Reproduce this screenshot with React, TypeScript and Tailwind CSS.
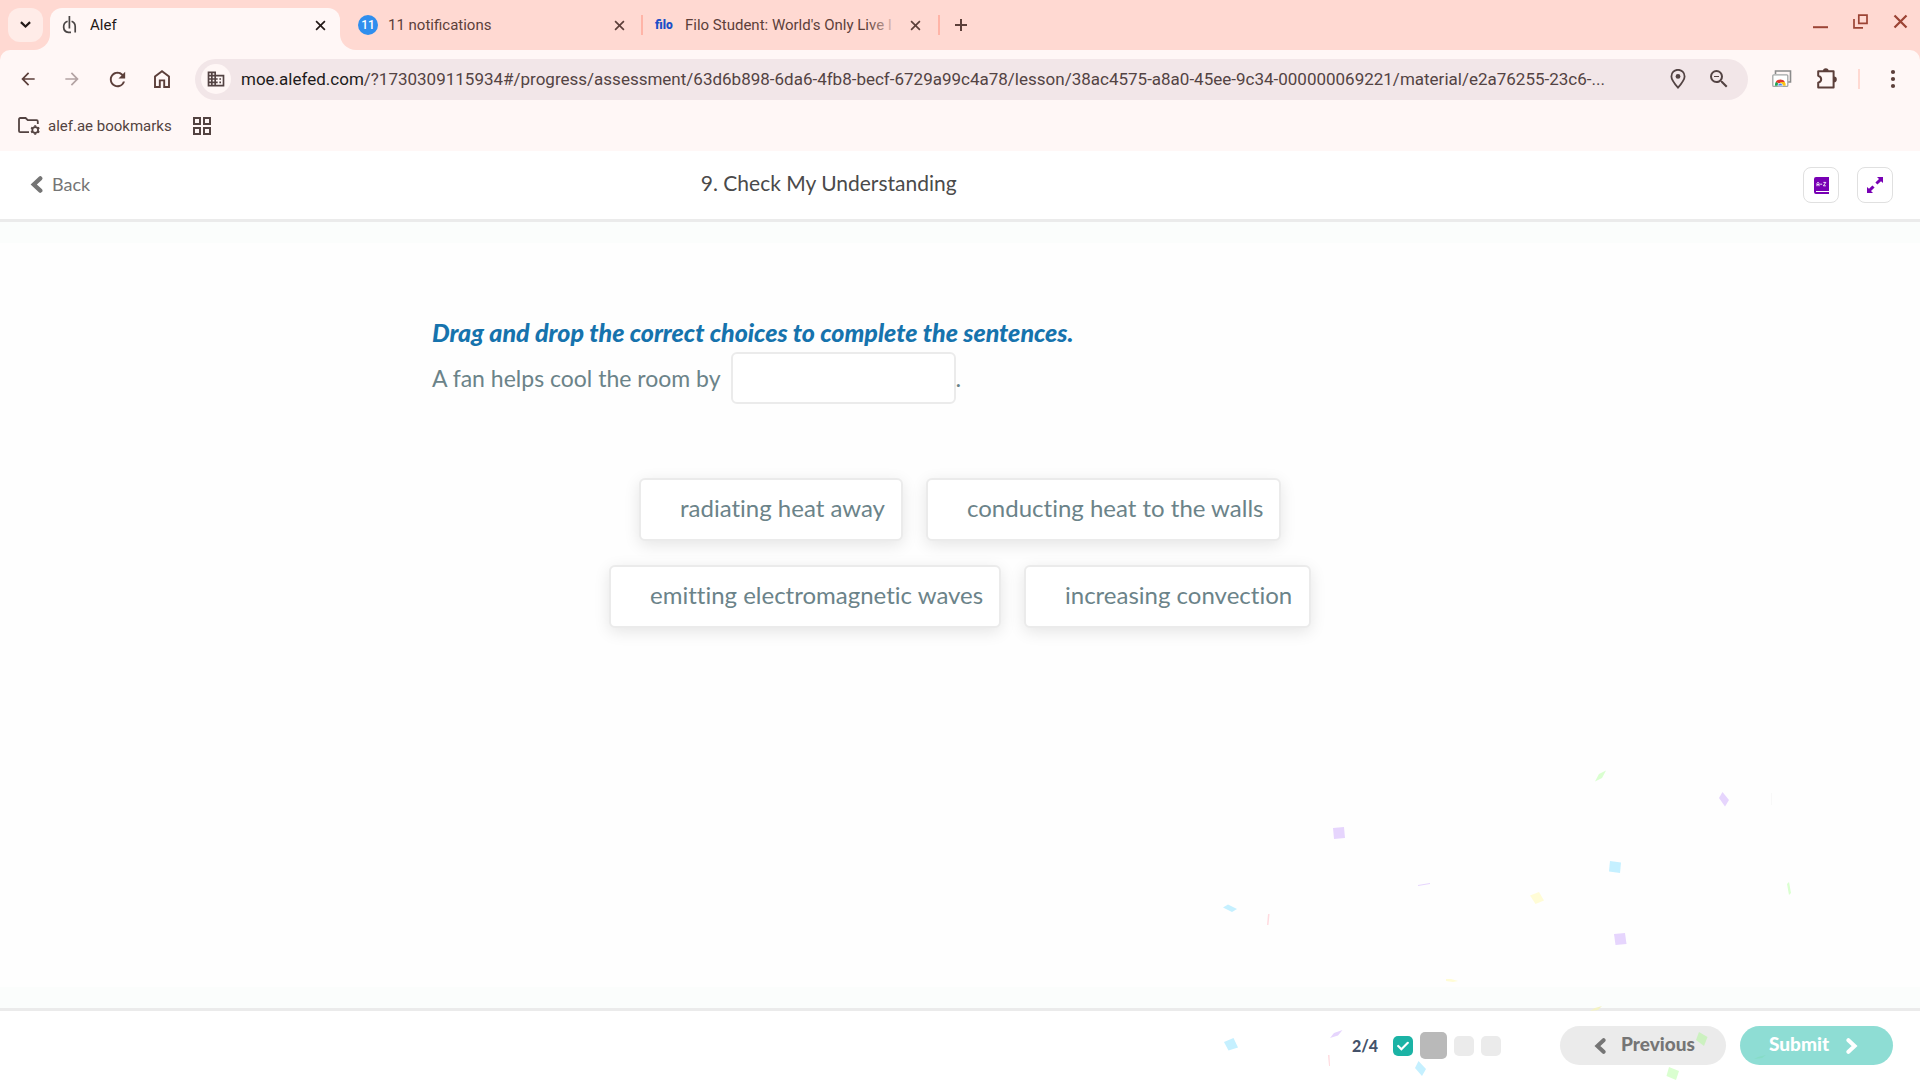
import type { ReactNode } from "react";
import { MdArrowBack, MdArrowForward, MdRefresh, MdDomain, MdZoomOut, MdOutlineGridView } from "react-icons/md";

const confetti: { points: string; fill: string }[] = [
  { points: "1333,828 1344,827 1345,838 1334,839", fill: "#e6d5fd" },
  { points: "1418,885 1424,884 1430,883 1430,884 1424,885 1418,886", fill: "#e6d5fd" },
  { points: "1223,907.5 1228,904.5 1237,909 1232,912", fill: "#c5f0ff" },
  { points: "1267,925 1268,914 1269.5,914 1268.5,925", fill: "#ffdbe0" },
  { points: "1530,895.5 1539,892 1544,900.5 1535.5,904", fill: "#fffcd6" },
  { points: "1446,979 1451,979 1458,981 1453,982 1446,981", fill: "#fffcd6" },
  { points: "1224,1042 1233.5,1038 1238,1047.5 1228.5,1050.5", fill: "#c5f0ff" },
  { points: "1330,1038 1334,1033 1342.5,1030 1338,1035.5", fill: "#e6d5fd" },
  { points: "1328,1055 1329.5,1055 1330,1066 1329,1066", fill: "#ffdbe0" },
  { points: "1418.5,1061 1426,1069 1422,1076 1415,1068", fill: "#c5f0ff" },
  { points: "1595,781.5 1599,774 1606,770.5 1602,778", fill: "#daffd0" },
  { points: "1722.5,792 1729,800 1725,806.5 1719,798", fill: "#e6d5fd" },
  { points: "1771,793 1772,793 1772,805 1771,805", fill: "#f8f8f8" },
  { points: "1610,861 1621,862.5 1620,873 1609,871.5", fill: "#c5f0ff" },
  { points: "1787,884 1789,882 1791,893 1789,895", fill: "#daffd0" },
  { points: "1614,934 1625,933 1626.5,944 1615.5,945", fill: "#e6d5fd" },
  { points: "1590,1011 1595,1008 1602,1006 1598,1010", fill: "#f4f3c4" },
  { points: "1699,1032 1707.5,1037 1704,1046 1696,1040", fill: "#ccf1c0" },
  { points: "1669,1067 1679,1071 1676,1080 1666.5,1076", fill: "#daffd0" },
  { points: "1754,1059 1758,1057 1766,1055 1762,1058", fill: "#86dcc6" },
];

const choices: { label: string; width: string }[][] = [
  [
    { label: "radiating heat away", width: "w-[264px]" },
    { label: "conducting heat to the walls", width: "w-[355px]" },
  ],
  [
    { label: "emitting electromagnetic waves", width: "w-[392px]" },
    { label: "increasing convection", width: "w-[287px]" },
  ],
];

function Cross({ className }: { className: string }) {
  return (
    <svg viewBox="0 0 12 12" className={className} fill="none" stroke="currentColor" strokeWidth="1.8">
      <path d="M1.2 1.2 10.8 10.8M10.8 1.2 1.2 10.8" />
    </svg>
  );
}

function Chevron({ right, className }: { right?: boolean; className: string }) {
  return (
    <svg viewBox="0 0 12 16" className={className} fill="none" stroke="currentColor" strokeWidth="4" strokeLinecap="round" strokeLinejoin="miter">
      <path d={right ? "M2.4 2.2 8.6 8 2.4 13.8" : "M9.6 2.2 3.4 8 9.6 13.8"} />
    </svg>
  );
}

function Tab({ icon, title, className, children }: { icon: ReactNode; title: string; className: string; children?: ReactNode }) {
  return (
    <div className={`flex h-[34px] items-center ${className}`}>
      {icon}
      <span className="min-w-0 flex-1 overflow-hidden whitespace-nowrap">{title}</span>
      {children}
      <button aria-label={`Close ${title}`} className="ml-2 flex size-4 items-center justify-center">
        <Cross className="size-[11px]" />
      </button>
    </div>
  );
}

function TabStrip() {
  return (
    <div className="flex h-[50px] items-start bg-[#ffd9d2] pr-3 text-[15px] text-[#5c3f3a]">
      <div className="h-[50px] w-[50px] bg-[#fff7f6]">
        <div className="h-[50px] rounded-br-2xl bg-[#ffd9d2] pl-2 pt-2">
          <button aria-label="Search tabs" className="flex h-[34px] w-[35px] items-center justify-center rounded-xl bg-[#ffece8] text-[#231917]">
            <svg viewBox="0 0 12 8" className="w-[11px]" fill="none" stroke="currentColor" strokeWidth="2.4">
              <path d="M1 1.2 6 6 11 1.2" />
            </svg>
          </button>
        </div>
      </div>
      <div className="h-[50px] bg-[#ffd9d2] pt-2">
        <Tab
          title="Alef"
          className="h-[42px] w-[290px] rounded-t-xl bg-[#fff7f6] pb-2 pl-3 pr-3 text-[#231917]"
          icon={
            <svg viewBox="0 0 16 18" className="mr-3 h-[18px] w-4 text-[#4a4545]" fill="none" stroke="currentColor" strokeWidth="1.7">
              <path d="M7.4 0V12.5M5.6 5.2C.2 7 .2 15.4 6.4 16.4H9M9.6 5.2C12 6 13.2 8 13.2 10.5V16.6" />
            </svg>
          }
        />
      </div>
      <div className="h-[50px] bg-[#fff7f6]">
        <div className="h-[50px] rounded-bl-2xl bg-[#ffd9d2] pt-2">
          <Tab
            title="11 notifications"
            className="w-[301px] pl-[18px] pr-[14px]"
            icon={<span className="mr-[10px] flex size-5 items-center justify-center rounded-full bg-[#2f8eee] text-xs font-medium text-white">11</span>}
          />
        </div>
      </div>
      <div className="mt-[15px] h-5 w-[2px] bg-[#ffb4a7]" />
      <div className="pt-2">
        <Tab
          title="Filo Student: World's Only Live I"
          className="w-[295px] pl-3 pr-[15px]"
          icon={<span className="mr-2 w-[22px] text-xs font-black text-[#1b50c8]">filo</span>}
        >
          <span className="-ml-8 h-6 w-8 bg-linear-to-r from-transparent to-[#ffd9d2]" />
        </Tab>
      </div>
      <div className="mt-[15px] h-5 w-[2px] bg-[#ffb4a7]" />
      <button aria-label="New tab" className="ml-[15px] mt-[19px] size-3">
        <svg viewBox="0 0 12 12" className="size-3" stroke="currentColor" strokeWidth="2">
          <path d="M6 0V12M0 6H12" />
        </svg>
      </button>
      <div className="ml-auto mt-[14px] flex items-center gap-[25px] text-[#9c4435]">
        <button aria-label="Minimize">
          <svg viewBox="0 0 15 15" className="size-[15px]" stroke="currentColor" strokeWidth="2">
            <path d="M0 13.2H15" />
          </svg>
        </button>
        <button aria-label="Restore">
          <svg viewBox="0 0 15 15" className="size-[15px]" fill="none" stroke="currentColor" strokeWidth="1.7">
            <path d="M5.8 1.2H14V9.4H5.8ZM1 5V13.8H10" />
          </svg>
        </button>
        <button aria-label="Close window">
          <Cross className="size-[15px]" />
        </button>
      </div>
    </div>
  );
}

function Toolbar() {
  return (
    <div className="bg-[#ffd9d2]">
      <div className="rounded-t-[10px] bg-[#fff7f6]">
        <div className="flex h-[58px] items-center pl-[18px] text-[#5c3f3a]">
          <button aria-label="Go back"><MdArrowBack className="size-5" /></button>
          <button aria-label="Go forward" className="ml-6 text-[#b3a3a3]"><MdArrowForward className="size-5" /></button>
          <button aria-label="Reload" className="ml-6"><MdRefresh className="size-[23px]" /></button>
          <button aria-label="Home" className="ml-[22px]">
            <svg viewBox="0 0 16 18" className="mx-[3px] h-[18px] w-4" fill="none" stroke="currentColor" strokeWidth="1.9">
              <path d="M1 17V6.4L8 1.2 15 6.4V17H10.2V10.4H5.8V17Z" />
            </svg>
          </button>
          <div className="ml-[22px] flex h-[41px] min-w-0 flex-1 items-center rounded-full bg-[#f2e6e8] pl-[6px] pr-[17px] text-[#534343]">
            <button aria-label="Site information" className="flex size-[30px] shrink-0 items-center justify-center rounded-full bg-[#fff7f6]">
              <MdDomain className="size-5" />
            </button>
            <p className="ml-[10px] min-w-0 flex-1 truncate pt-px text-[17px]">
              <span className="text-[#201a1a]">moe.alefed.com</span>
              /?1730309115934#/progress/assessment/63d6b898-6da6-4fb8-becf-6729a99c4a78/lesson/38ac4575-a8a0-45ee-9c34-000000069221/material/e2a76255-23c6-...
            </p>
            <button aria-label="Location" className="ml-7">
              <svg viewBox="0 0 16 20" className="h-5 w-4" fill="none" stroke="currentColor" strokeWidth="1.8">
                <path d="M8 18.6C4 14 1.4 10.6 1.4 7.4A6.6 6.6 0 0 1 14.6 7.4C14.6 10.6 12 14 8 18.6Z" />
                <circle cx="8" cy="7.4" r="2.4" fill="currentColor" stroke="none" />
              </svg>
            </button>
            <button aria-label="Zoom out" className="ml-[21px]"><MdZoomOut className="size-[24px]" /></button>
          </div>
          <button aria-label="Tab gallery" className="ml-6">
            <svg viewBox="0 0 20 18" className="h-[18px] w-5" fill="none">
              <path d="M3.5 4V1H18.5V12H16" stroke="#8b8b8b" strokeWidth="1.6" />
              <rect x=".8" y="4.8" width="15" height="11.6" rx="1" fill="#fff" stroke="#a3a6a6" strokeWidth="1.3" />
              <path d="M3 15.8A5.4 5.4 0 0 1 4.2 11.6L8.3 15.8Z" fill="#23a455" />
              <path d="M3.8 12A5.2 5.2 0 0 1 12.8 12L8.3 13.8Z" fill="#e2382b" />
              <path d="M12.8 12A5 5 0 0 1 13.6 15.8H8.3V12Z" fill="#fbc116" />
              <path d="M5.8 15.8A2.5 2.5 0 0 1 10.8 15.8Z" fill="#4285f4" stroke="#fff" strokeWidth=".6" />
            </svg>
          </button>
          <button aria-label="Extensions" className="ml-6">
            <svg viewBox="0 0 22 22" className="size-[22px]">
              <path d="M2.2 3.2H17.6V19.4H2.2V14.8C6.2 13.6 6.2 9 2.2 7.8Z" fill="none" stroke="currentColor" strokeWidth="2" strokeLinejoin="round" />
              <path d="M7 3A2.8 2.8 0 0 1 12.6 3ZM18 8.6A2.8 2.8 0 0 1 18 14.2Z" fill="currentColor" />
            </svg>
          </button>
          <div className="ml-5 h-5 w-[2px] bg-[#ffd9d2]" />
          <button aria-label="Menu" className="ml-[30px] mr-[24px]">
            <svg viewBox="0 0 6 20" className="h-5 w-[6px]" fill="currentColor">
              <circle cx="3" cy="3" r="2.1" />
              <circle cx="3" cy="10" r="2.1" />
              <circle cx="3" cy="17" r="2.1" />
            </svg>
          </button>
        </div>
        <div className="flex h-[43px] items-center pb-[7px] pl-[18px] text-[15px] text-[#534341]">
          <button className="flex items-center gap-2">
            <svg viewBox="0 0 22 18" className="h-[18px] w-[22px]" fill="none" stroke="currentColor">
              <path d="M11 15.2H2.2A1.2 1.2 0 0 1 1 14V2.2A1.2 1.2 0 0 1 2.2 1H7.6L9.8 3.2H18.6A1.2 1.2 0 0 1 19.8 4.4V7" strokeWidth="1.8" />
              <circle cx="17.2" cy="13" r="2.9" strokeWidth="1.8" />
              <path d="M17.2 8.3V9.8M17.2 16.2V17.7M13.1 10.6 14.5 11.4M19.9 14.6 21.3 15.4M13.1 15.4 14.5 14.6M19.9 11.4 21.3 10.6" strokeWidth="2" />
            </svg>
            alef.ae bookmarks
          </button>
          <button aria-label="Apps" className="ml-[18px]"><MdOutlineGridView className="size-6" /></button>
        </div>
      </div>
    </div>
  );
}

function LessonHeader() {
  return (
    <header className="flex h-[71px] items-center border-b-[3px] border-[#ebebeb] bg-white font-['Lato','Open_Sans',sans-serif]">
      <div className="w-[36.5%] pb-[2px] pl-[30px]">
        <button className="flex items-center gap-[9px] text-lg leading-6 text-[#757575]">
          <Chevron className="h-[17px] w-[13px]" />
          Back
        </button>
      </div>
      <h1 className="pb-1 text-[21px] text-[#4a4a4a]">9. Check My Understanding</h1>
      <div className="ml-auto flex gap-[18px] pr-[27px]">
        <button aria-label="Glossary" className="flex size-9 items-center justify-center rounded-lg border border-[#e0e0e0]">
          <svg viewBox="0 0 15 17" className="h-[17px] w-[15px]">
            <path d="M2 0H15V14H2V15H15V17H2A2 2 0 0 1 0 15V2A2 2 0 0 1 2 0Z" fill="#7800b4" />
            <path d="M3 9.2V6.4L4 5.2 5 6.4V9.2M3 7.6H5M6.2 7.2H8.2M9.4 5.4H11.8L9.4 8.8H11.8" fill="none" stroke="#fff" strokeWidth=".9" />
          </svg>
        </button>
        <button aria-label="Full screen" className="flex size-9 items-center justify-center rounded-lg border border-[#e0e0e0]">
          <svg viewBox="0 0 16 16" className="size-4" fill="#7800b4">
            <path d="M10 0H16V6L14 4.2 10.4 7.6 8.4 5.6 12 2ZM6 16H0V10L2 11.8 5.4 8.4 7.6 10.4 4 14Z" />
          </svg>
        </button>
      </div>
    </header>
  );
}

function Question() {
  return (
    <main className="flex flex-1 flex-col border-y-[21px] border-[#fbfdfc] bg-[#fefefe] font-['Lato','Open_Sans',sans-serif] text-2xl text-[#6b8389] [font-variant-ligatures:no-common-ligatures]">
      <div className="mx-auto w-[55%] pt-[71px]">
        <p className="text-[25px] font-black italic leading-9 text-[#1673ad]">Drag and drop the correct choices to complete the sentences.</p>
        <div className="mt-[2px] flex items-center">
          <label htmlFor="answer" className="text-[23px]">A fan helps cool the room by</label>
          <input id="answer" readOnly className="ml-[10px] h-[52px] w-[225px] rounded-md border-2 border-[#ebebeb] bg-white" />
          <span>.</span>
        </div>
        <div className="mt-[74px] flex flex-col gap-6">
          {choices.map((row) => (
            <div key={row[0].label} className="flex justify-center gap-[23px]">
              {row.map((choice) => (
                <button
                  key={choice.label}
                  draggable
                  className={`h-[63px] whitespace-nowrap rounded-md border-2 border-[#ebebeb] bg-white pb-1 pl-[39px] text-left shadow-[0_4px_16px_rgba(0,0,0,0.1)] ${choice.width}`}
                >
                  {choice.label}
                </button>
              ))}
            </div>
          ))}
        </div>
      </div>
    </main>
  );
}

function LessonFooter() {
  return (
    <footer className="flex h-[72px] items-center justify-end border-t-[3px] border-[#ebebeb] bg-white pr-[27px] font-['Lato','Open_Sans',sans-serif]">
      <span className="text-base font-black text-[#44526a]">2/4</span>
      <div className="ml-[15px] flex items-center gap-[7px]">
        <span className="flex size-5 items-center justify-center rounded-[5px] bg-[#1bb3a5]">
          <svg viewBox="0 0 12 10" className="w-3" fill="none" stroke="#fff" strokeWidth="2.2" strokeLinecap="round">
            <path d="M1.2 5 4.4 8.2 10.8 1.8" />
          </svg>
        </span>
        <span className="size-[27px] rounded-[5px] bg-[#b9b9b9]" />
        <span className="size-5 rounded-[5px] bg-[#ebebeb]" />
        <span className="size-5 rounded-[5px] bg-[#ebebeb]" />
      </div>
      <button className="ml-[59px] flex h-[39px] w-[166px] items-center rounded-full bg-[#ebebeb] pl-[34px] text-[19px] font-black text-[#757575]">
        <Chevron className="mr-[15px] h-4 w-3" />
        <span className="pb-[2px]">Previous</span>
      </button>
      <button className="ml-[14px] flex h-[39px] w-[153px] items-center rounded-full bg-[#8eddd4] pl-[29px] text-[19px] font-black text-white">
        <span className="pb-[2px]">Submit</span>
        <Chevron right className="ml-[17px] h-4 w-3" />
      </button>
    </footer>
  );
}

export default function App() {
  return (
    <div className="relative flex min-h-screen flex-col bg-white font-['Roboto',sans-serif]">
      <TabStrip />
      <Toolbar />
      <LessonHeader />
      <Question />
      <LessonFooter />
      <svg viewBox="1200 750 720 330" className="pointer-events-none absolute bottom-0 right-0 h-[330px] w-[720px]" aria-hidden="true">
        {confetti.map((piece) => (
          <polygon key={piece.points} points={piece.points} fill={piece.fill} />
        ))}
      </svg>
    </div>
  );
}
